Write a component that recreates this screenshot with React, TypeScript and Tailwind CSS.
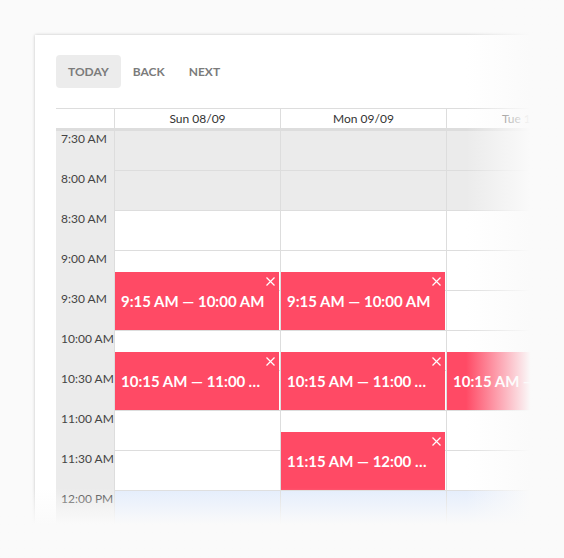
import React from "react";

const times = ["7:30 AM","8:00 AM","8:30 AM","9:00 AM","9:30 AM","10:00 AM","10:30 AM","11:00 AM","11:30 AM","12:00 PM","12:30 PM"];

type Ev = { start: number; label: string };
const days: { name: string; events: Ev[] }[] = [
  { name: "Sun 08/09", events: [{ start: 3.5, label: "9:15 AM — 10:00 AM" }, { start: 5.5, label: "10:15 AM — 11:00 AM" }] },
  { name: "Mon 09/09", events: [{ start: 3.5, label: "9:15 AM — 10:00 AM" }, { start: 5.5, label: "10:15 AM — 11:00 AM" }, { start: 7.5, label: "11:15 AM — 12:00 PM" }] },
  { name: "Tue 10/09", events: [{ start: 5.5, label: "10:15 AM — 11:00 AM" }] },
];

function CloseIcon() {
  return (
    <svg width="9" height="9" viewBox="0 0 9 9" className="absolute top-[5px] right-[4px]">
      <path d="M0.5 0.5 L8.5 8.5 M8.5 0.5 L0.5 8.5" stroke="white" strokeWidth="1.2" />
    </svg>
  );
}

export default function App() {
  return (
    <div
      className="relative w-[564px] h-[558px] overflow-hidden bg-[#fafafa] pt-[35px] pl-[35px]"
      style={{ fontFamily: "Lato, 'Open Sans', sans-serif" }}
    >
      <div className="w-[700px] h-[600px] bg-white shadow-[0_0_3px_rgba(0,0,0,0.22)] pt-[20px] pl-[21px]">
        <div className="flex h-[33px] text-[12px] font-bold text-[#7b7b7b]">
          <button className="px-3 rounded-[4px] bg-[#ececec]">TODAY</button>
          <button className="px-3">BACK</button>
          <button className="px-3">NEXT</button>
        </div>
        <div className="mt-[20px]">
          <div className="flex h-[23px] border-t border-b-[3px] border-[#dddddd] text-[12px] text-[#333]">
            <div className="w-[58px] shrink-0" />
            {days.map((d) => (
              <div key={d.name} className="w-[166px] shrink-0 border-l border-[#dddddd] flex items-center justify-center">
                {d.name}
              </div>
            ))}
          </div>
          <div className="flex">
            <div className="w-[58px] shrink-0 bg-[#ebebeb]">
              {times.map((t) => (
                <div key={t} className="h-[40px] pl-[5px] leading-[16px] text-[12px] text-[#444]">
                  {t}
                </div>
              ))}
            </div>
            {days.map((d) => (
              <div key={d.name} className="relative w-[166px] shrink-0 border-l border-[#dddddd]">
                {times.map((t, i) => (
                  <div
                    key={t}
                    className={
                      "h-[40px] border-b border-[#dddddd] " +
                      (i < 2 ? "bg-[#ebebeb]" : i === 9 ? "bg-[#e4edfc]" : "bg-white")
                    }
                  />
                ))}
                {d.events.map((e) => (
                  <div
                    key={e.label}
                    className="absolute left-0 right-[1px] h-[58px] bg-[#ff4a65] text-white font-bold text-[15px] flex items-center pl-[6px] pr-[10px]"
                    style={{ top: e.start * 40 + 1 }}
                  >
                    <span className="truncate">{e.label}</span>
                    <CloseIcon />
                  </div>
                ))}
              </div>
            ))}
          </div>
        </div>
      </div>
      <div className="absolute top-0 right-0 w-[98px] h-full bg-linear-to-r from-[#fafafa]/0 to-[#fafafa] to-[66%]" />
      <div className="absolute left-0 bottom-0 w-full h-[70px] bg-linear-to-b from-[#fafafa]/0 to-[#fafafa] to-[52%]" />
    </div>
  );
}
